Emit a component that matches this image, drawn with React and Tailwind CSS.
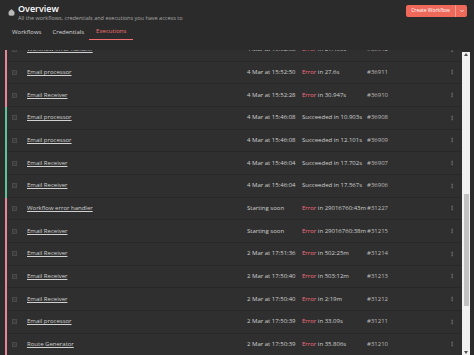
import { Home, ChevronDown, MoreVertical } from 'lucide-react';

const rows = [
  { name: 'Workflow error handler', date: '4 Mar at 15:52:58', ok: false, time: '21.465s', id: '#36912' },
  { name: 'Email processor', date: '4 Mar at 15:52:50', ok: false, time: '27.6s', id: '#36911' },
  { name: 'Email Receiver', date: '4 Mar at 15:52:28', ok: false, time: '30.947s', id: '#36910' },
  { name: 'Email processor', date: '4 Mar at 15:46:08', ok: true, time: '10.903s', id: '#36908' },
  { name: 'Email processor', date: '4 Mar at 15:46:08', ok: true, time: '12.101s', id: '#36909' },
  { name: 'Email Receiver', date: '4 Mar at 15:46:04', ok: true, time: '17.702s', id: '#36907' },
  { name: 'Email Receiver', date: '4 Mar at 15:46:04', ok: true, time: '17.567s', id: '#36906' },
  { name: 'Workflow error handler', date: 'Starting soon', ok: false, time: '29016760:43m', id: '#31227' },
  { name: 'Email Receiver', date: 'Starting soon', ok: false, time: '29016760:38m', id: '#31215' },
  { name: 'Email Receiver', date: '2 Mar at 17:51:36', ok: false, time: '502:25m', id: '#31214' },
  { name: 'Email Receiver', date: '2 Mar at 17:50:40', ok: false, time: '503:12m', id: '#31213' },
  { name: 'Email Receiver', date: '2 Mar at 17:50:40', ok: false, time: '2:19m', id: '#31212' },
  { name: 'Email processor', date: '2 Mar at 17:50:39', ok: false, time: '33.09s', id: '#31211' },
  { name: 'Route Generator', date: '2 Mar at 17:50:39', ok: false, time: '35.806s', id: '#31210' },
];

function Row({ r }) {
  return (
    <div className="flex h-[22.67px] bg-[#2f2f2f] text-[6px] text-[#d0d0d0]">
      <div className={r.ok ? 'w-[2px] bg-[#5ec39a]' : 'w-[2px] bg-[#e88599]'} />
      <div className="flex-1 flex items-center border-b border-[#282828]">
        <div className="w-[5px] h-[5px] ml-[5px] bg-[#3a3a3a] border-[0.5px] border-[#4a4a4a]" />
        <div className="w-[220px] ml-[10px] underline truncate">{r.name}</div>
        <div className="w-[55px]">{r.date}</div>
        <div className="w-[65px]">
          {r.ok ? (
            <span>Succeeded in {r.time}</span>
          ) : (
            <span><span className="text-[#f56f7f]">Error</span> in {r.time}</span>
          )}
        </div>
        <div className="w-[82px] text-[#bdbdbd]">{r.id}</div>
        <MoreVertical size={6} className="text-[#8e8e8e]" />
      </div>
    </div>
  );
}

export default function App() {
  return (
    <div className="w-[474px] h-[355px] overflow-hidden bg-[#2b2b2b] flex flex-col" style={{ fontFamily: '"Open Sans", sans-serif' }}>
      <div className="flex items-start justify-between pl-[8px] pr-[7px] pt-[3px]">
        <div className="flex items-center gap-[3px]">
          <Home size={7} className="text-[#bbbbbb] fill-[#bbbbbb] mt-[1px]" />
          <div>
            <div className="text-[9px] font-semibold text-white leading-[12px]">Overview</div>
            <div className="text-[5.5px] text-[#a8a8a8] leading-[6px]">All the workflows, credentials and executions you have access to</div>
          </div>
        </div>
        <div className="flex items-center h-[12px] mt-[2px] bg-[#ef695b] rounded-[2px] text-white text-[5px]">
          <span className="px-[5px]">Create Workflow</span>
          <div className="w-px self-stretch bg-[#f59a90]" />
          <ChevronDown size={6} className="mx-[2.5px]" strokeWidth={3} />
        </div>
      </div>

      <div className="flex items-end pl-[6px] mt-[5px] h-[14px] text-[6px] text-[#d6d6d6]">
        <div className="px-[6px] pb-[3px]">Workflows</div>
        <div className="pl-[5px] pr-[6px] pb-[3px]">Credentials</div>
        <div className="px-[7px] pb-[3px] ml-[-1px] text-[#f47070] border-b border-[#f47070]">Executions</div>
      </div>

      <div className="flex-1 flex mt-[10px] min-h-0 overflow-hidden">
        <div className="flex-1 pl-[5px] overflow-hidden">
          <div className="-mt-[11px]">
            {rows.map((r, i) => (
              <Row key={i} r={r} />
            ))}
          </div>
        </div>
        <div className="w-[8px] mt-[2px] bg-[#f1f1f1] flex flex-col items-center justify-between py-[1px]">
          <div className="w-0 h-0 border-l-[2px] border-r-[2px] border-b-[3px] border-l-transparent border-r-transparent border-b-[#505050]" />
          <div className="w-[5px] h-[112px] bg-[#c1c1c1] mt-[138px] mb-auto" />
          <div className="w-0 h-0 border-l-[2px] border-r-[2px] border-t-[3px] border-l-transparent border-r-transparent border-t-[#505050]" />
        </div>
        <div className="w-[4px]" />
      </div>
    </div>
  );
}
